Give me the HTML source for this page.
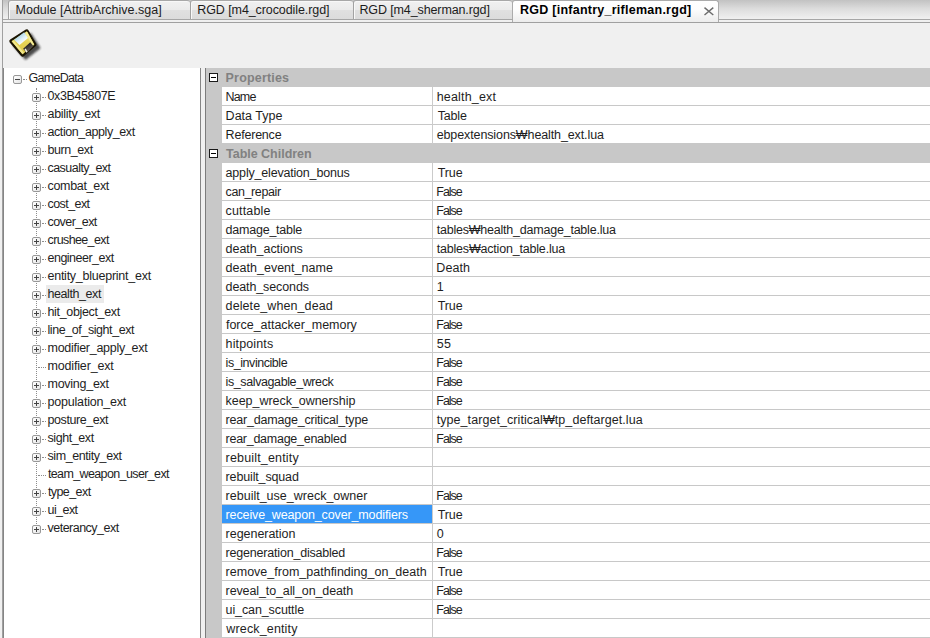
<!DOCTYPE html>
<html lang="en"><head><meta charset="utf-8"><title>RGD [infantry_rifleman.rgd]</title>
<style>
html,body{margin:0;padding:0}
body{width:930px;height:638px;overflow:hidden;background:#f0f0f0;position:relative;font-family:"Liberation Sans","NanumGothic",sans-serif;font-size:12.5px;color:#1e1e1e}
i,b,span,div,svg{position:absolute;display:block}
span,b{white-space:nowrap}
#tabstrip{left:3px;top:0;width:927px;height:19px;background:linear-gradient(#c2c2c2,#dcdcdc 45%,#f0f0f0)}
.tb{top:0;height:19px;box-sizing:border-box;border-left:1px solid #a2a2a2;border-top:1px solid #a8a8a8;border-radius:3px 3px 0 0;background:linear-gradient(#f1f1f1,#ebebeb 48%,#e0e0e0 52%,#dbdbdb);box-shadow:inset 1px 1px 0 #f8f8f8}
#atab{left:512px;top:0;width:207px;height:22px;box-sizing:border-box;border:1px solid #ababab;border-bottom:none;border-radius:3px 3px 0 0;background:linear-gradient(#ffffff,#fdfdfd 40%,#ececec)}
#l19{left:3px;top:19px;width:927px;height:1px;background:#a6a6a6}
#l19:after{content:"";position:absolute;left:510px;top:0;width:205px;height:1px;background:#f0f0f0}
#l22{left:3px;top:22px;width:927px;height:1px;background:#a0a0a0}
#lleft{left:2px;top:0;width:1px;height:638px;background:#a0a0a0}
.tt{top:1px;line-height:18.5px;color:#1c1c1c}
.tt.b{font-weight:bold;color:#000}
#tx{left:702.5px;top:5.5px}
#tree{left:3px;top:68px;width:198px;height:580px;background:#fff;border:1px solid #858585;border-top:none;box-sizing:border-box}
.tl{line-height:18px}
.tsel{height:18px;background:#ebebeb}
.bx{width:9px;height:9px;box-sizing:border-box;border:1px solid #989898;border-radius:2px;background:linear-gradient(135deg,#fff,#e4e4e4)}
.bx:before{content:"";position:absolute;left:1px;top:3px;width:5px;height:1px;background:#444}
.bx.pl:after{content:"";position:absolute;left:3px;top:1px;width:1px;height:5px;background:#444}
.hd{height:0;border-top:1px dotted #8c8c8c}
.vl{width:0;border-left:1px dotted #8c8c8c}
#gl{left:205px;top:68px;width:1px;height:570px;background:#7c7c7c}
#grid{left:206px;top:68px;width:724px;height:570px;background:#c8c8c8}
.ht{left:226px;margin-top:1px;line-height:19px;color:#818181}
.gb{left:209px;width:9px;height:9px;box-sizing:border-box;border:1px solid #1a1a1a;background:#fff}
.gb:before{content:"";position:absolute;left:1px;top:3px;width:5px;height:1px;background:#000}
.gr{left:222px;width:708px;height:18px;background:#fff}
.gr i{left:210px;top:0;width:1px;height:19px;background:#cbcbcb}
.gr.s:before{content:"";position:absolute;left:0;top:0;width:210px;height:18px;background:#3697f8}

.nt{left:225.6px;margin-top:1px;line-height:19px}
.nt.w{color:#fff}
.vt{left:436.7px;margin-top:1px;line-height:19px}

</style></head><body>
<div id="tabstrip"></div>
<div class="tb" style="left:8px;width:182px"></div><div class="tb" style="left:190px;width:163px"></div><div class="tb" style="left:353px;width:159px"></div>
<div id="atab"></div>
<div id="l19"></div><div id="l22"></div><div id="lleft"></div>
<span class="tt" id="tab0" style="left:15.5px;letter-spacing:0.013px">Module [AttribArchive.sga]</span>
<span class="tt" id="tab1" style="left:197.3px;letter-spacing:-0.090px">RGD [m4_crocodile.rgd]</span>
<span class="tt" id="tab2" style="left:359.4px;letter-spacing:-0.114px">RGD [m4_sherman.rgd]</span>
<span class="tt b" id="tab3" style="left:520.0px;letter-spacing:0.253px">RGD [infantry_rifleman.rgd]</span>
<svg id="tx" width="12" height="12" viewBox="0 0 12 12"><path d="M1.5 1.6L10.3 9M10.3 1.6L1.5 9" stroke="#6c6c6c" stroke-width="1.4" fill="none"/></svg>
<svg id="ico" width="48" height="44" viewBox="0 22 48 44" style="left:0;top:22px">
<defs>
<filter id="sh" x="-30%" y="-30%" width="160%" height="160%"><feGaussianBlur stdDeviation="1.2"/></filter>
<linearGradient id="yb" gradientUnits="userSpaceOnUse" x1="27" y1="31" x2="19" y2="54"><stop offset="0" stop-color="#f3ea92"/><stop offset=".45" stop-color="#e6d355"/><stop offset="1" stop-color="#dcc648"/></linearGradient>
<linearGradient id="lb" gradientUnits="userSpaceOnUse" x1="18" y1="34.5" x2="24" y2="43"><stop offset="0" stop-color="#9ccde3"/><stop offset=".55" stop-color="#dff0f7"/><stop offset="1" stop-color="#ffffff"/></linearGradient>
<linearGradient id="sb" gradientUnits="userSpaceOnUse" x1="26" y1="45" x2="30" y2="51"><stop offset="0" stop-color="#231e1b"/><stop offset="1" stop-color="#6a645f"/></linearGradient>
</defs>
<polygon points="30.6,34 13.6,45 25.6,59 39.6,47.8" fill="#1c1c1c" stroke="#1c1c1c" stroke-width="1.5" stroke-linejoin="round" opacity=".78" filter="url(#sh)"/>
<polygon points="26.8,31.2 11.2,41.2 22.5,54.7 34.6,44.6" fill="#1b1503" stroke="#1b1503" stroke-width="3.8" stroke-linejoin="round"/>
<polygon points="26.9,31.8 12,41.3 22.5,53.9 33.9,44.5" fill="url(#yb)" stroke="#e6d355" stroke-width=".8" stroke-linejoin="round"/>
<polygon points="11.8,41.3 22.5,54.1 24.1,52.8 13.5,40.2" fill="#f1e88c"/>
<polygon points="26.9,31.6 34.1,44.5 32.6,45.9 25.2,32.7" fill="#f3eb97"/>
<polygon points="14.1,39.7 24.2,32.3 28,38.1 19.5,45" fill="url(#lb)"/>
<polygon points="23.1,48.8 30.3,42.3 33.3,46.1 26.7,53" fill="url(#sb)"/>
<polygon points="24.5,49.3 25.8,48.5 27.5,51.7 26.2,52.5" fill="#f3f1e2"/>
</svg>

<div id="tree"></div>
<i class="hd" style="left:23px;top:79px;width:4px"></i>
<i class="vl" style="left:36px;top:88px;height:440px"></i>
<i class="bx mi" style="left:13px;top:75px"></i>
<span class="tl" id="tr" style="left:27.6px;top:69px;letter-spacing:-0.701px;margin-left:0.93px">GameData</span>
<i class="bx pl" style="left:32px;top:93px"></i><i class="hd" style="left:42px;top:97px;width:4px"></i>
<span class="tl" id="t0" style="left:47.5px;top:87px;letter-spacing:-0.381px">0x3B45807E</span>
<i class="bx pl" style="left:32px;top:111px"></i><i class="hd" style="left:42px;top:115px;width:4px"></i>
<span class="tl" id="t1" style="left:47.5px;top:105px;letter-spacing:-0.284px">ability_ext</span>
<i class="bx pl" style="left:32px;top:129px"></i><i class="hd" style="left:42px;top:133px;width:4px"></i>
<span class="tl" id="t2" style="left:47.5px;top:123px;letter-spacing:-0.414px">action_apply_ext</span>
<i class="bx pl" style="left:32px;top:147px"></i><i class="hd" style="left:42px;top:151px;width:4px"></i>
<span class="tl" id="t3" style="left:47.5px;top:141px;letter-spacing:-0.429px">burn_ext</span>
<i class="bx pl" style="left:32px;top:165px"></i><i class="hd" style="left:42px;top:169px;width:4px"></i>
<span class="tl" id="t4" style="left:47.5px;top:159px;letter-spacing:-0.540px">casualty_ext</span>
<i class="bx pl" style="left:32px;top:183px"></i><i class="hd" style="left:42px;top:187px;width:4px"></i>
<span class="tl" id="t5" style="left:47.5px;top:177px;letter-spacing:-0.312px">combat_ext</span>
<i class="bx pl" style="left:32px;top:201px"></i><i class="hd" style="left:42px;top:205px;width:4px"></i>
<span class="tl" id="t6" style="left:47.5px;top:195px;letter-spacing:-0.568px">cost_ext</span>
<i class="bx pl" style="left:32px;top:219px"></i><i class="hd" style="left:42px;top:223px;width:4px"></i>
<span class="tl" id="t7" style="left:47.5px;top:213px;letter-spacing:-0.548px">cover_ext</span>
<i class="bx pl" style="left:32px;top:237px"></i><i class="hd" style="left:42px;top:241px;width:4px"></i>
<span class="tl" id="t8" style="left:47.5px;top:231px;letter-spacing:-0.621px">crushee_ext</span>
<i class="bx pl" style="left:32px;top:255px"></i><i class="hd" style="left:42px;top:259px;width:4px"></i>
<span class="tl" id="t9" style="left:47.5px;top:249px;letter-spacing:-0.504px">engineer_ext</span>
<i class="bx pl" style="left:32px;top:273px"></i><i class="hd" style="left:42px;top:277px;width:4px"></i>
<span class="tl" id="t10" style="left:47.5px;top:267px;letter-spacing:-0.252px">entity_blueprint_ext</span>
<i class="tsel" style="left:46px;top:285px;width:58px"></i>
<i class="bx pl" style="left:32px;top:291px"></i><i class="hd" style="left:42px;top:295px;width:4px"></i>
<span class="tl" id="t11" style="left:47.5px;top:285px;letter-spacing:-0.424px">health_ext</span>
<i class="bx pl" style="left:32px;top:309px"></i><i class="hd" style="left:42px;top:313px;width:4px"></i>
<span class="tl" id="t12" style="left:47.5px;top:303px;letter-spacing:-0.346px">hit_object_ext</span>
<i class="bx pl" style="left:32px;top:327px"></i><i class="hd" style="left:42px;top:331px;width:4px"></i>
<span class="tl" id="t13" style="left:47.5px;top:321px;letter-spacing:-0.425px">line_of_sight_ext</span>
<i class="bx pl" style="left:32px;top:345px"></i><i class="hd" style="left:42px;top:349px;width:4px"></i>
<span class="tl" id="t14" style="left:47.5px;top:339px;letter-spacing:-0.280px">modifier_apply_ext</span>
<i class="hd" style="left:38px;top:367px;width:8px"></i>
<span class="tl" id="t15" style="left:47.5px;top:357px;letter-spacing:-0.166px">modifier_ext</span>
<i class="bx pl" style="left:32px;top:381px"></i><i class="hd" style="left:42px;top:385px;width:4px"></i>
<span class="tl" id="t16" style="left:47.5px;top:375px;letter-spacing:-0.266px">moving_ext</span>
<i class="bx pl" style="left:32px;top:399px"></i><i class="hd" style="left:42px;top:403px;width:4px"></i>
<span class="tl" id="t17" style="left:47.5px;top:393px;letter-spacing:-0.193px">population_ext</span>
<i class="bx pl" style="left:32px;top:417px"></i><i class="hd" style="left:42px;top:421px;width:4px"></i>
<span class="tl" id="t18" style="left:47.5px;top:411px;letter-spacing:-0.423px">posture_ext</span>
<i class="bx pl" style="left:32px;top:435px"></i><i class="hd" style="left:42px;top:439px;width:4px"></i>
<span class="tl" id="t19" style="left:47.5px;top:429px;letter-spacing:-0.424px">sight_ext</span>
<i class="bx pl" style="left:32px;top:453px"></i><i class="hd" style="left:42px;top:457px;width:4px"></i>
<span class="tl" id="t20" style="left:47.5px;top:447px;letter-spacing:-0.416px">sim_entity_ext</span>
<i class="hd" style="left:38px;top:475px;width:8px"></i>
<span class="tl" id="t21" style="left:47.5px;top:465px;letter-spacing:-0.619px;margin-left:0.40px">team_weapon_user_ext</span>
<i class="bx pl" style="left:32px;top:489px"></i><i class="hd" style="left:42px;top:493px;width:4px"></i>
<span class="tl" id="t22" style="left:47.5px;top:483px;letter-spacing:-0.571px;margin-left:0.40px">type_ext</span>
<i class="bx pl" style="left:32px;top:507px"></i><i class="hd" style="left:42px;top:511px;width:4px"></i>
<span class="tl" id="t23" style="left:47.5px;top:501px;letter-spacing:-0.560px">ui_ext</span>
<i class="bx pl" style="left:32px;top:525px"></i><i class="hd" style="left:42px;top:529px;width:4px"></i>
<span class="tl" id="t24" style="left:47.5px;top:519px;letter-spacing:-0.516px">veterancy_ext</span>
<div id="gl"></div><div id="grid"></div>
<i class="gb" style="top:73px"></i><b class="ht" id="n0" style="top:68px;letter-spacing:0.177px;margin-left:-0.40px">Properties</b>
<div class="gr" style="top:87px"><i></i></div>
<span class="nt" id="n1" style="top:87px;letter-spacing:-0.866px">Name</span>
<span class="vt" id="v1" style="top:87px;letter-spacing:0.177px">health_ext</span>
<div class="gr" style="top:106px"><i></i></div>
<span class="nt" id="n2" style="top:106px;letter-spacing:0.025px">Data Type</span>
<span class="vt" id="v2" style="top:106px;letter-spacing:-0.141px;margin-left:0.94px">Table</span>
<div class="gr" style="top:125px"><i></i></div>
<span class="nt" id="n3" style="top:125px;letter-spacing:-0.207px">Reference</span>
<span class="vt" id="v3" style="top:125px;letter-spacing:-0.111px">ebpextensions₩health_ext.lua</span>
<i class="gb" style="top:149px"></i><b class="ht" id="n4" style="top:144px;letter-spacing:-0.015px">Table Children</b>
<div class="gr" style="top:163px"><i></i></div>
<span class="nt" id="n5" style="top:163px;letter-spacing:-0.190px">apply_elevation_bonus</span>
<span class="vt" id="v5" style="top:163px;letter-spacing:-0.067px;margin-left:0.94px">True</span>
<div class="gr" style="top:182px"><i></i></div>
<span class="nt" id="n6" style="top:182px;letter-spacing:-0.400px">can_repair</span>
<span class="vt" id="v6" style="top:182px;letter-spacing:-1.050px;margin-left:-0.40px">False</span>
<div class="gr" style="top:201px"><i></i></div>
<span class="nt" id="n7" style="top:201px;letter-spacing:0.141px">cuttable</span>
<span class="vt" id="v7" style="top:201px;letter-spacing:-1.050px;margin-left:-0.40px">False</span>
<div class="gr" style="top:220px"><i></i></div>
<span class="nt" id="n8" style="top:220px;letter-spacing:-0.231px">damage_table</span>
<span class="vt" id="v8" style="top:220px;letter-spacing:-0.219px">tables₩health_damage_table.lua</span>
<div class="gr" style="top:239px"><i></i></div>
<span class="nt" id="n9" style="top:239px;letter-spacing:-0.051px">death_actions</span>
<span class="vt" id="v9" style="top:239px;letter-spacing:-0.191px">tables₩action_table.lua</span>
<div class="gr" style="top:258px"><i></i></div>
<span class="nt" id="n10" style="top:258px;letter-spacing:0.014px">death_event_name</span>
<span class="vt" id="v10" style="top:258px;letter-spacing:0.100px;margin-left:-0.40px">Death</span>
<div class="gr" style="top:277px"><i></i></div>
<span class="nt" id="n11" style="top:277px;letter-spacing:-0.117px">death_seconds</span>
<span class="vt" id="v11" style="top:277px">1</span>
<div class="gr" style="top:296px"><i></i></div>
<span class="nt" id="n12" style="top:296px;letter-spacing:0.097px">delete_when_dead</span>
<span class="vt" id="v12" style="top:296px;letter-spacing:-0.067px;margin-left:0.94px">True</span>
<div class="gr" style="top:315px"><i></i></div>
<span class="nt" id="n13" style="top:315px;letter-spacing:-0.022px;margin-left:0.38px">force_attacker_memory</span>
<span class="vt" id="v13" style="top:315px;letter-spacing:-1.050px;margin-left:-0.40px">False</span>
<div class="gr" style="top:334px"><i></i></div>
<span class="nt" id="n14" style="top:334px;letter-spacing:0.124px">hitpoints</span>
<span class="vt" id="v14" style="top:334px;letter-spacing:0.275px">55</span>
<div class="gr" style="top:353px"><i></i></div>
<span class="nt" id="n15" style="top:353px;letter-spacing:-0.446px">is_invincible</span>
<span class="vt" id="v15" style="top:353px;letter-spacing:-1.050px;margin-left:-0.40px">False</span>
<div class="gr" style="top:372px"><i></i></div>
<span class="nt" id="n16" style="top:372px;letter-spacing:-0.400px">is_salvagable_wreck</span>
<span class="vt" id="v16" style="top:372px;letter-spacing:-1.050px;margin-left:-0.40px">False</span>
<div class="gr" style="top:391px"><i></i></div>
<span class="nt" id="n17" style="top:391px;letter-spacing:-0.043px">keep_wreck_ownership</span>
<span class="vt" id="v17" style="top:391px;letter-spacing:-1.050px;margin-left:-0.40px">False</span>
<div class="gr" style="top:410px"><i></i></div>
<span class="nt" id="n18" style="top:410px;letter-spacing:-0.200px">rear_damage_critical_type</span>
<span class="vt" id="v18" style="top:410px;letter-spacing:0.067px">type_target_critical₩tp_deftarget.lua</span>
<div class="gr" style="top:429px"><i></i></div>
<span class="nt" id="n19" style="top:429px;letter-spacing:-0.267px">rear_damage_enabled</span>
<span class="vt" id="v19" style="top:429px;letter-spacing:-1.050px;margin-left:-0.40px">False</span>
<div class="gr" style="top:448px"><i></i></div>
<span class="nt" id="n20" style="top:448px;letter-spacing:0.169px">rebuilt_entity</span>
<div class="gr" style="top:467px"><i></i></div>
<span class="nt" id="n21" style="top:467px;letter-spacing:-0.150px">rebuilt_squad</span>
<div class="gr" style="top:486px"><i></i></div>
<span class="nt" id="n22" style="top:486px;letter-spacing:0.004px">rebuilt_use_wreck_owner</span>
<span class="vt" id="v22" style="top:486px;letter-spacing:-1.050px;margin-left:-0.40px">False</span>
<div class="gr s" style="top:505px"><i></i></div>
<span class="nt w" id="n23" style="top:505px;letter-spacing:-0.132px">receive_weapon_cover_modifiers</span>
<span class="vt" id="v23" style="top:505px;letter-spacing:-0.067px;margin-left:0.94px">True</span>
<div class="gr" style="top:524px"><i></i></div>
<span class="nt" id="n24" style="top:524px;letter-spacing:-0.036px">regeneration</span>
<span class="vt" id="v24" style="top:524px">0</span>
<div class="gr" style="top:543px"><i></i></div>
<span class="nt" id="n25" style="top:543px;letter-spacing:-0.200px">regeneration_disabled</span>
<span class="vt" id="v25" style="top:543px;letter-spacing:-1.050px;margin-left:-0.40px">False</span>
<div class="gr" style="top:562px"><i></i></div>
<span class="nt" id="n26" style="top:562px;letter-spacing:0.008px">remove_from_pathfinding_on_death</span>
<span class="vt" id="v26" style="top:562px;letter-spacing:-0.067px;margin-left:0.94px">True</span>
<div class="gr" style="top:581px"><i></i></div>
<span class="nt" id="n27" style="top:581px;letter-spacing:-0.115px">reveal_to_all_on_death</span>
<span class="vt" id="v27" style="top:581px;letter-spacing:-1.050px;margin-left:-0.40px">False</span>
<div class="gr" style="top:600px"><i></i></div>
<span class="nt" id="n28" style="top:600px;letter-spacing:-0.109px">ui_can_scuttle</span>
<span class="vt" id="v28" style="top:600px;letter-spacing:-1.050px;margin-left:-0.40px">False</span>
<div class="gr" style="top:619px"><i></i></div>
<span class="nt" id="n29" style="top:619px;letter-spacing:0.146px;margin-left:0.74px">wreck_entity</span>
</body></html>
